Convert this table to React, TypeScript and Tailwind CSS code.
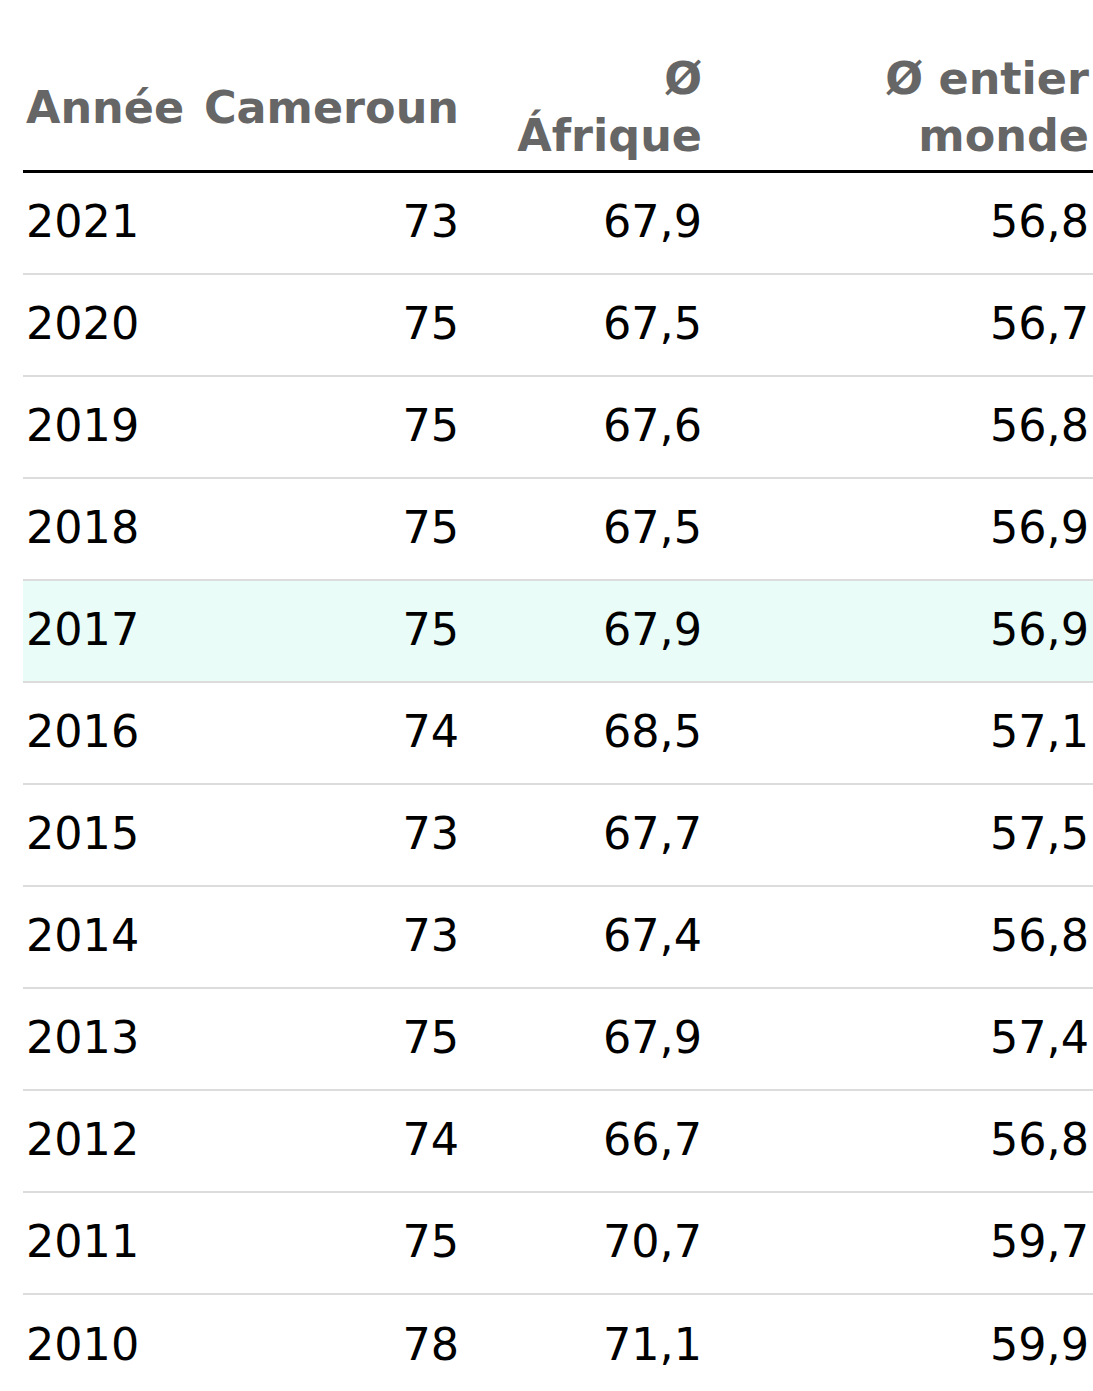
import React from "react";

const rows = [
  ["2021", "73", "67,9", "56,8"],
  ["2020", "75", "67,5", "56,7"],
  ["2019", "75", "67,6", "56,8"],
  ["2018", "75", "67,5", "56,9"],
  ["2017", "75", "67,9", "56,9"],
  ["2016", "74", "68,5", "57,1"],
  ["2015", "73", "67,7", "57,5"],
  ["2014", "73", "67,4", "56,8"],
  ["2013", "75", "67,9", "57,4"],
  ["2012", "74", "66,7", "56,8"],
  ["2011", "75", "70,7", "59,7"],
  ["2010", "78", "71,1", "59,9"],
];

export default function App() {
  return (
    <div className="min-h-screen bg-white pt-[50px] pl-[23px]" style={{ fontFamily: '"DejaVu Sans", Verdana, sans-serif' }}>
      <table className="table-fixed w-[1070px] border-collapse text-[44.5px] text-black">
        <colgroup>
          <col className="w-[167px]" />
          <col className="w-[272px]" />
          <col className="w-[243px]" />
          <col className="w-[388px]" />
        </colgroup>
        <thead>
          <tr className="border-b-[3px] border-black text-[#666] font-bold leading-[57px]">
            <th className="px-[3px] pb-[6px] text-left align-middle">Année</th>
            <th className="px-[3px] pb-[6px] text-right align-middle">Cameroun</th>
            <th className="px-[3px] pb-[6px] text-right align-bottom">
              Ø<br />Áfrique
            </th>
            <th className="px-[4px] pb-[6px] text-right align-bottom">
              Ø entier<br />monde
            </th>
          </tr>
        </thead>
        <tbody>
          {rows.map((r, i) => (
            <tr
              key={r[0]}
              className={
                (i === 4 ? "bg-[#e9fcf8] " : "") +
                (i < rows.length - 1 ? "border-b-2 border-[#dcdcdc]" : "")
              }
            >
              <td className="h-[102px] px-[3px] text-left">{r[0]}</td>
              <td className="h-[102px] px-[3px] text-right">{r[1]}</td>
              <td className="h-[102px] px-[3px] text-right">{r[2]}</td>
              <td className="h-[102px] px-[4px] text-right">{r[3]}</td>
            </tr>
          ))}
        </tbody>
      </table>
    </div>
  );
}
